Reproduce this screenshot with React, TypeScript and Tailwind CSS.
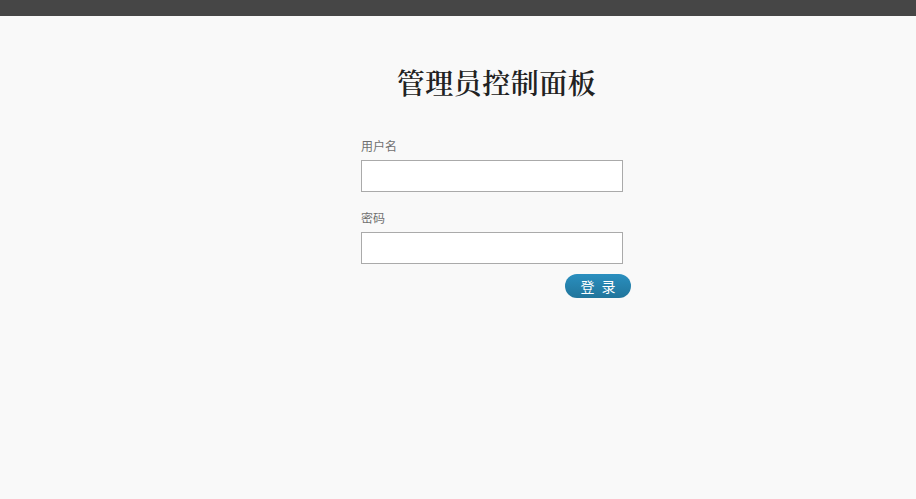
export default function App() {
  return (
    <div className="min-h-[499px] bg-[#f9f9f9]" style={{ fontFamily: '"Noto Sans CJK SC", "Liberation Sans", sans-serif' }}>
      <div className="h-4 bg-[#464646]" />
      <div className="pl-[361px]">
        <div className="w-[270px]">
          <h1 className="mt-[47px] pl-[1px] text-center text-[28px] leading-[38px] font-semibold text-[#222] tracking-[0.5px]" style={{ fontFamily: '"Noto Serif CJK SC", "Noto Sans CJK SC", serif' }}>
            管理员控制面板
          </h1>
          <div className="mt-[36px] text-[12px] leading-[18px] text-[#707070]">用户名</div>
          <input className="mt-[5px] block h-8 w-[262px] border border-[#aaa] bg-white" />
          <div className="mt-[17px] text-[12px] leading-[18px] text-[#707070]">密码</div>
          <input type="password" className="mt-[5px] block h-8 w-[262px] border border-[#aaa] bg-white" />
          <div className="mt-[10px] flex justify-end">
            <button className="h-6 w-[66px] rounded-full bg-gradient-to-b from-[#2a8fbf] to-[#21759b] text-[14px] leading-6 text-white tracking-[2px] pl-[2px]">
              登 录
            </button>
          </div>
        </div>
      </div>
    </div>
  );
}
